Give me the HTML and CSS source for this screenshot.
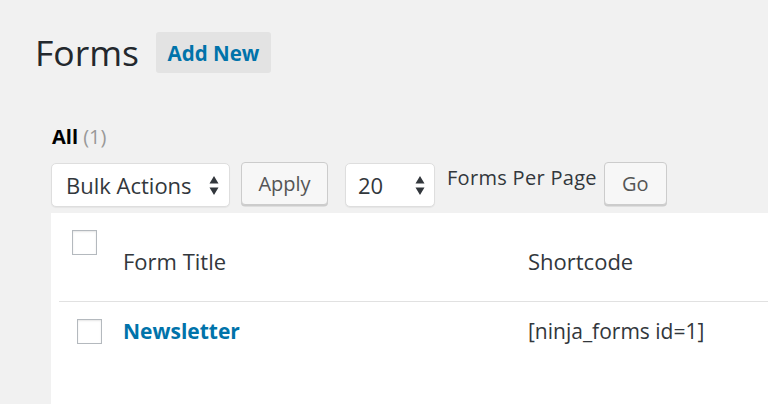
FILE: index.html
```html
<!DOCTYPE html>
<html lang="en">
<head>
<meta charset="utf-8">
<title>Forms</title>
<link rel="stylesheet" href="styles.css">
</head>
<body>
<div class="wrap">
  <div class="title-row">
    <h1 class="page-title">Forms</h1>
    <a class="add-new" href="#">Add New</a>
  </div>
  <ul class="subsubsub">
    <li><b class="current">All</b> <span class="count">(1)</span></li>
  </ul>
  <div class="tablenav">
    <div class="select bulk">
      <span>Bulk Actions</span>
      <svg class="arrows" width="10" height="19" viewBox="0 0 10 19"><path d="M5 0 L9.5 7.5 H0.5 Z M5 19 L9.5 11.5 H0.5 Z" fill="#32373c"/></svg>
    </div>
    <button class="button apply">Apply</button>
    <div class="select per">
      <span>20</span>
      <svg class="arrows" width="10" height="19" viewBox="0 0 10 19"><path d="M5 0 L9.5 7.5 H0.5 Z M5 19 L9.5 11.5 H0.5 Z" fill="#32373c"/></svg>
    </div>
    <span class="per-label">Forms Per Page</span>
    <button class="button go">Go</button>
  </div>
  <div class="table">
    <div class="thead">
      <div class="cb-col"><span class="checkbox head-cb"></span></div>
      <div class="col-title">Form Title</div>
      <div class="col-short">Shortcode</div>
    </div>
    <div class="trow">
      <div class="cb-col"><span class="checkbox row-cb"></span></div>
      <div class="col-title"><a class="row-title" href="#">Newsletter</a></div>
      <div class="col-short">[ninja_forms id=1]</div>
    </div>
  </div>
</div>
</body>
</html>
```
FILE: styles.css
```css
html, body {
  margin: 0;
  padding: 0;
  background: #f1f1f1;
  font-family: "Open Sans", "Liberation Sans", sans-serif;
  color: #32373c;
  height: 100%;
  overflow: hidden;
}
.wrap {
  padding: 0 0 0 51px;
}
.title-row {
  display: flex;
  align-items: center;
  margin-left: -16px;
  padding-top: 32px;
  height: 41px;
}
.page-title {
  margin: 0;
  font-size: 35.5px;
  font-weight: 400;
  color: #23282d;
  line-height: 41px;
}
.add-new {
  margin-left: 17px;
  height: 41px;
  width: 115px;
  box-sizing: border-box;
  display: flex;
  align-items: center;
  justify-content: center;
  background: #e3e3e3;
  border-radius: 3px;
  color: #0073aa;
  font-weight: 700;
  font-size: 20.5px;
  text-decoration: none;
}
.subsubsub {
  list-style: none;
  margin: 0;
  padding: 0;
  margin-top: 50px;
  font-size: 20px;
  line-height: 28px;
  height: 28px;
  padding-left: 1px;
}
.current {
  color: #000;
  font-weight: 700;
}
.count {
  color: #999;
}
.tablenav {
  display: flex;
  align-items: flex-start;
  margin-top: 11px;
  height: 51px;
}
.select {
  box-sizing: border-box;
  height: 44px;
  background: #fff;
  border: 1px solid #dedede;
  border-radius: 5px;
  box-shadow: 0 1px 1px rgba(0,0,0,0.05);
  display: flex;
  align-items: center;
  justify-content: space-between;
  font-size: 22px;
  color: #32373c;
  margin-top: 1px;
}
.bulk {
  width: 179px;
  padding: 0 10px 0 14px;
}
.per {
  width: 90px;
  padding: 0 9px 0 12px;
  margin-left: 17px;
}
.arrows {
  display: block;
}
.button {
  box-sizing: border-box;
  height: 43px;
  background: #f7f7f7;
  border: 1px solid #cccccc;
  border-radius: 4px;
  box-shadow: 0 1.5px 0 #cccccc;
  font-family: "Open Sans", "Liberation Sans", sans-serif;
  font-size: 20px;
  color: #555;
  padding: 0;
  margin: 0;
}
.apply {
  width: 87px;
  margin-left: 11px;
}
.go {
  width: 63px;
  margin-left: 7px;
}
.per-label {
  margin-left: 12px;
  font-size: 20px;
  letter-spacing: 0.3px;
  color: #32373c;
  line-height: 28px;
  margin-top: 2px;
}
.table {
  background: #fff;
  height: 200px;
  padding-left: 8px;
}
.thead, .trow {
  display: flex;
}
.thead {
  height: 88px;
  border-bottom: 1px solid #e1e1e1;
}
.cb-col {
  width: 64px;
  flex: none;
}
.checkbox {
  display: block;
  box-sizing: border-box;
  width: 25px;
  height: 25px;
  border: 1px solid #b4b9be;
  background: #fff;
  box-shadow: inset 0 1px 2px rgba(0,0,0,0.1);
}
.head-cb {
  margin: 17px 0 0 13px;
}
.row-cb {
  margin: 17px 0 0 18px;
}
.col-title {
  width: 405px;
  flex: none;
  color: #32373c;
}
.col-short {
  color: #32373c;
}
.thead .col-title, .thead .col-short {
  font-size: 22px;
  padding-top: 33px;
  line-height: 30px;
}
.trow .col-title, .trow .col-short {
  font-size: 21px;
  padding-top: 14px;
  line-height: 30px;
}
.row-title {
  color: #0073aa;
  font-weight: 700;
  text-decoration: none;
}
```
